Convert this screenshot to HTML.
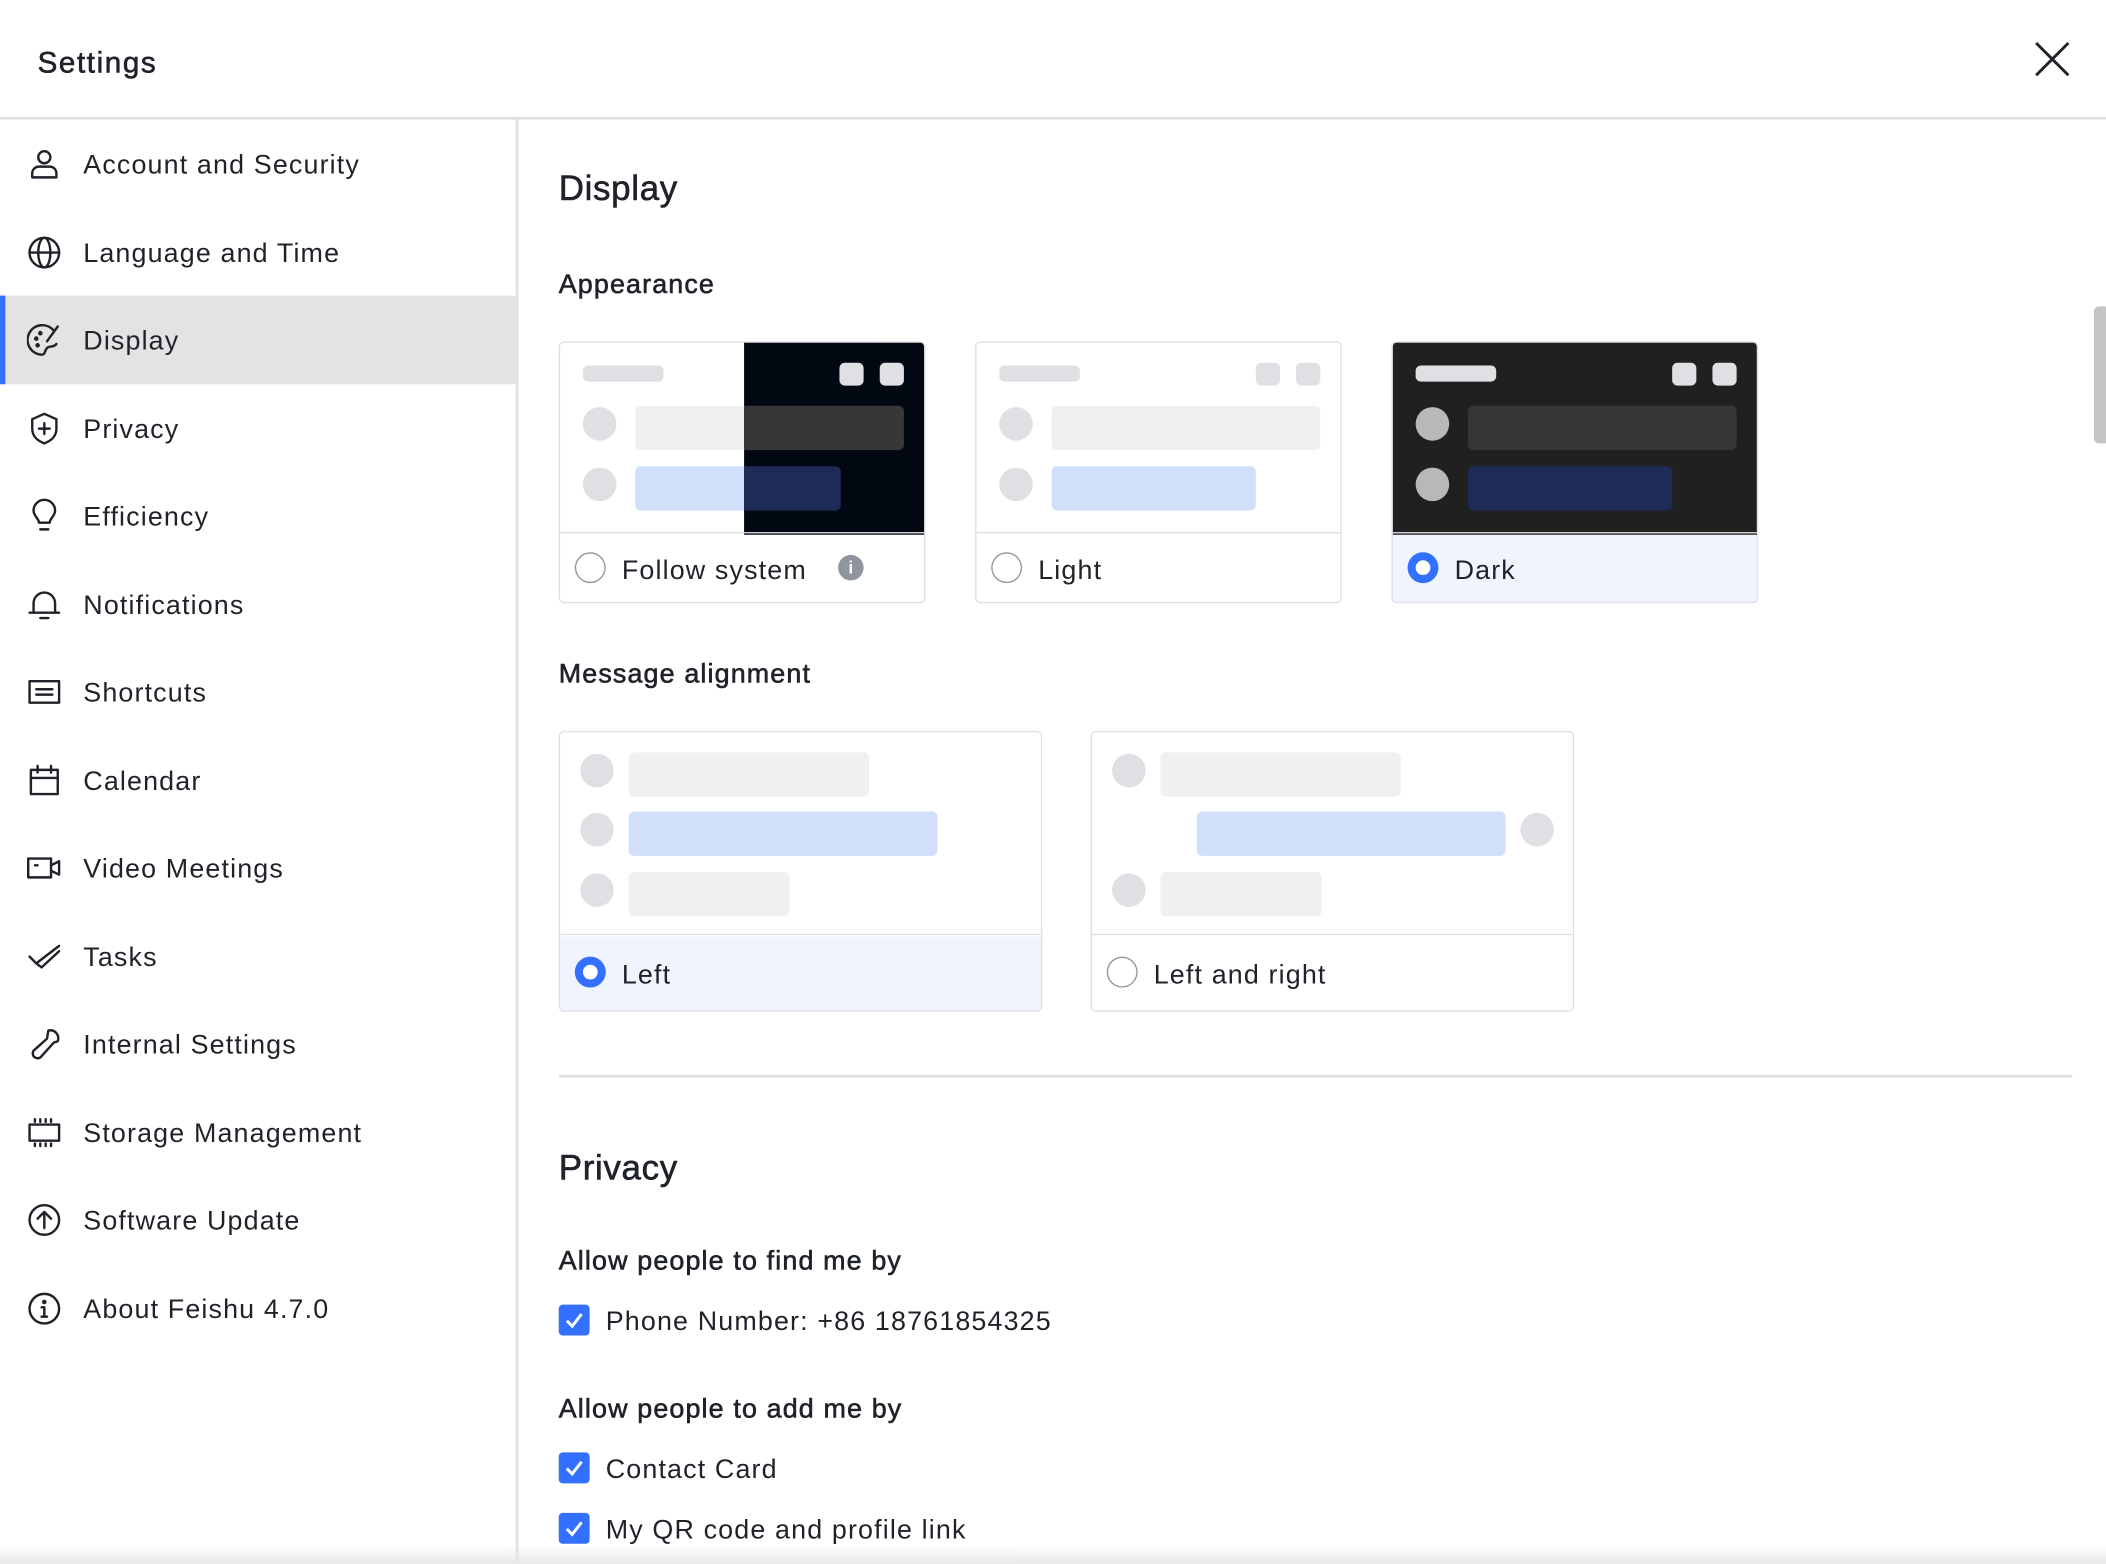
<!DOCTYPE html>
<html><head><meta charset="utf-8"><style>
*{box-sizing:border-box;margin:0;padding:0}
html,body{width:2106px;height:1564px;overflow:hidden;background:#fff}
#w{position:absolute;left:0;top:0;width:1568px;height:1164px;transform:scale(1.3431,1.3436);transform-origin:0 0;font-family:"Liberation Sans",sans-serif;color:#1f2329;letter-spacing:0.85px}
.a{position:absolute}
.t{position:absolute;white-space:nowrap;line-height:1}
.m{-webkit-text-stroke:0.45px #1f2329}
.nav{position:absolute;left:0;width:385px;height:65px}
.nav svg{position:absolute;left:20px;top:20px;width:26px;height:26px;fill:none;stroke:#1f2329;stroke-width:1.8;stroke-linecap:round;stroke-linejoin:round}
.nav span{position:absolute;left:62px;top:23px;font-size:20px;white-space:nowrap}
.card{position:absolute;border:1.5px solid #dee0e3;border-radius:4px;overflow:hidden;background:#fff}
.lbl{position:absolute;left:0;right:0;bottom:0;border-top:1.5px solid #dee0e3;font-size:20px}
.lbl span{position:absolute;left:46px;top:17px}
.radio{position:absolute;left:11px;width:23px;height:23px;border-radius:50%;border:1.5px solid #8f959e;background:#fff}
.radio.on{border:6px solid #3370ff}
.r{position:absolute;border-radius:4px}
.c{position:absolute;border-radius:50%}
.cb{position:absolute;left:416px;width:23px;height:23px;background:#3370ff;border-radius:3px}
.cb svg{position:absolute;left:3px;top:3px}
</style></head><body><div id="w">
<div class="t m" style="left:28px;top:36px;font-size:22px;letter-spacing:1.2px">Settings</div>
<svg class="a" style="left:1514px;top:30px" width="28" height="28" viewBox="0 0 28 28"><path d="M2 2L26 26M26 2L2 26" stroke="#1f2329" stroke-width="2.2"/></svg>
<div class="a" style="left:0;top:87px;width:1568px;height:2px;background:#dee0e3"></div>
<div class="a" style="left:384px;top:89px;width:2px;height:1075px;background:#dee0e3"></div>

<div class="nav" style="top:89px"><svg viewBox="0 0 26 26"><circle cx="13" cy="8" r="4.5"/><path d="M4 23v-3a5 5 0 0 1 5-5h8a5 5 0 0 1 5 5v3z"/></svg><span>Account and Security</span></div>
<div class="nav" style="top:155px"><svg viewBox="0 0 26 26"><circle cx="13" cy="13" r="11"/><ellipse cx="13" cy="13" rx="4.5" ry="11"/><path d="M2 13h22"/></svg><span>Language and Time</span></div>
<div class="a" style="left:0;top:220px;width:384px;height:66px;background:#e3e3e4"></div>
<div class="a" style="left:0;top:220px;width:4px;height:66px;background:#3370ff"></div>
<div class="nav" style="top:220px"><svg viewBox="0 0 26 26"><path d="M20 6A11 11 0 1 0 11 24c3 0 2-3 4-5s5 0 7-3"/><path d="M23 3l-8 11"/><circle cx="7" cy="12" r=".8"/><circle cx="10" cy="8" r=".8"/><circle cx="8" cy="17" r=".8"/></svg><span>Display</span></div>
<div class="nav" style="top:286px"><svg viewBox="0 0 26 26"><path d="M13 2l9 4v7c0 6-4 9-9 11-5-2-9-5-9-11V6z"/><path d="M13 9v8M9 13h8"/></svg><span>Privacy</span></div>
<div class="nav" style="top:351px"><svg viewBox="0 0 26 26"><path d="M9 18c0-3-4-5-4-9a8 8 0 0 1 16 0c0 4-4 6-4 9z"/><path d="M10 23h6"/></svg><span>Efficiency</span></div>
<div class="nav" style="top:417px"><svg viewBox="0 0 26 26"><path d="M5 19v-7a8 8 0 0 1 16 0v7M2 19h22M10 23h6"/></svg><span>Notifications</span></div>
<div class="nav" style="top:482px"><svg viewBox="0 0 26 26"><rect x="2" y="5" width="22" height="16"/><path d="M7 11h12M7 15h12"/></svg><span>Shortcuts</span></div>
<div class="nav" style="top:548px"><svg viewBox="0 0 26 26"><rect x="3" y="5" width="20" height="18"/><path d="M3 11h20M8 2v5M18 2v5"/></svg><span>Calendar</span></div>
<div class="nav" style="top:613px"><svg viewBox="0 0 26 26"><rect x="1" y="6" width="17" height="14"/><path d="M18 11l6-3v10l-6-3M6 11h2"/></svg><span>Video Meetings</span></div>
<div class="nav" style="top:679px"><svg viewBox="0 0 26 26"><path d="M2 13l5 5L24 5M7 18l4 3 13-12"/></svg><span>Tasks</span></div>
<div class="nav" style="top:744px"><svg viewBox="0 0 26 26"><path d="M16 3a6 6 0 0 1 7 8l-3 1-9 10a3 3 0 0 1-6-4l10-9z"/></svg><span>Internal Settings</span></div>
<div class="nav" style="top:810px"><svg viewBox="0 0 26 26"><rect x="2" y="7" width="22" height="12"/><path d="M6 3v2M10 3v2M14 3v2M18 3v2M6 21v2M10 21v2M14 21v2M18 21v2"/></svg><span>Storage Management</span></div>
<div class="nav" style="top:875px"><svg viewBox="0 0 26 26"><circle cx="13" cy="13" r="11"/><path d="M13 19V7M8 12l5-5 5 5"/></svg><span>Software Update</span></div>
<div class="nav" style="top:941px"><svg viewBox="0 0 26 26"><circle cx="13" cy="13" r="11"/><path d="M13 12v7M11 19h4M11 12h2"/><circle cx="13" cy="8" r=".8"/></svg><span>About Feishu 4.7.0</span></div>

<div class="t m" style="left:416px;top:127px;font-size:26px;letter-spacing:0.5px">Display</div>
<div class="t m" style="left:416px;top:202px;font-size:20px">Appearance</div>

<div class="card" style="left:416px;top:254px;width:273px;height:195px">
 <div class="a" style="left:137px;top:0;width:136px;height:143px;background:#020812"></div>
 <div class="r" style="left:17px;top:17px;width:60px;height:12px;background:#dee0e3"></div>
 <div class="r" style="left:208px;top:15px;width:18px;height:17px;background:#dee0e3"></div>
 <div class="r" style="left:238px;top:15px;width:18px;height:17px;background:#dee0e3"></div>
 <div class="c" style="left:17px;top:48px;width:25px;height:25px;background:#dee0e3"></div>
 <div class="c" style="left:17px;top:93px;width:25px;height:25px;background:#dee0e3"></div>
 <div class="r" style="left:56px;top:47px;width:81px;height:33px;background:#eff0f1;border-radius:4px 0 0 4px"></div>
 <div class="r" style="left:137px;top:47px;width:119px;height:33px;background:#373737;border-radius:0 4px 4px 0"></div>
 <div class="r" style="left:56px;top:92px;width:81px;height:33px;background:#d1dffa;border-radius:4px 0 0 4px"></div>
 <div class="r" style="left:137px;top:92px;width:72px;height:33px;background:#1e2b57;border-radius:0 4px 4px 0"></div>
 <div class="lbl" style="height:52px"><div class="radio" style="top:14px"></div><span>Follow system</span><div class="c" style="left:207px;top:16px;width:19px;height:19px;background:#8f959e;color:#fff;font-size:13px;font-weight:bold;text-align:center;line-height:19px;letter-spacing:0">i</div></div>
</div>

<div class="card" style="left:726px;top:254px;width:273px;height:195px">
 <div class="r" style="left:17px;top:17px;width:60px;height:12px;background:#dee0e3"></div>
 <div class="r" style="left:208px;top:15px;width:18px;height:17px;background:#dee0e3"></div>
 <div class="r" style="left:238px;top:15px;width:18px;height:17px;background:#dee0e3"></div>
 <div class="c" style="left:17px;top:48px;width:25px;height:25px;background:#dee0e3"></div>
 <div class="c" style="left:17px;top:93px;width:25px;height:25px;background:#dee0e3"></div>
 <div class="r" style="left:56px;top:47px;width:200px;height:33px;background:#eff0f1"></div>
 <div class="r" style="left:56px;top:92px;width:152px;height:33px;background:#d1dffa"></div>
 <div class="lbl" style="height:52px"><div class="radio" style="top:14px"></div><span>Light</span></div>
</div>

<div class="card" style="left:1036px;top:254px;width:273px;height:195px;background:#f0f4ff">
 <div class="a" style="left:0;top:0;width:273px;height:143px;background:#202020"></div>
 <div class="r" style="left:17px;top:17px;width:60px;height:12px;background:#dee0e3"></div>
 <div class="r" style="left:208px;top:15px;width:18px;height:17px;background:#dee0e3"></div>
 <div class="r" style="left:238px;top:15px;width:18px;height:17px;background:#dee0e3"></div>
 <div class="c" style="left:17px;top:48px;width:25px;height:25px;background:#b8b8b8"></div>
 <div class="c" style="left:17px;top:93px;width:25px;height:25px;background:#b8b8b8"></div>
 <div class="r" style="left:56px;top:47px;width:200px;height:33px;background:#373737"></div>
 <div class="r" style="left:56px;top:92px;width:152px;height:33px;background:#1e2b57"></div>
 <div class="lbl" style="height:52px"><div class="radio on" style="top:14px"></div><span>Dark</span></div>
</div>

<div class="t m" style="left:416px;top:492px;font-size:20px">Message alignment</div>

<div class="card" style="left:416px;top:544px;width:360px;height:209px;background:#f0f4ff">
 <div class="a" style="left:0;top:0;width:360px;height:152px;background:#fff"></div>
 <div class="c" style="left:15px;top:16px;width:25px;height:25px;background:#dee0e3"></div>
 <div class="c" style="left:15px;top:60px;width:25px;height:25px;background:#dee0e3"></div>
 <div class="c" style="left:15px;top:105px;width:25px;height:25px;background:#dee0e3"></div>
 <div class="r" style="left:51px;top:15px;width:179px;height:33px;background:#eff0f1"></div>
 <div class="r" style="left:51px;top:59px;width:230px;height:33px;background:#d1dffa"></div>
 <div class="r" style="left:51px;top:104px;width:120px;height:33px;background:#eff0f1"></div>
 <div class="lbl" style="height:57px"><div class="radio on" style="top:16px"></div><span style="top:19px">Left</span></div>
</div>

<div class="card" style="left:812px;top:544px;width:360px;height:209px">
 <div class="c" style="left:15px;top:16px;width:25px;height:25px;background:#dee0e3"></div>
 <div class="c" style="left:319px;top:60px;width:25px;height:25px;background:#dee0e3"></div>
 <div class="c" style="left:15px;top:105px;width:25px;height:25px;background:#dee0e3"></div>
 <div class="r" style="left:51px;top:15px;width:179px;height:33px;background:#eff0f1"></div>
 <div class="r" style="left:78px;top:59px;width:230px;height:33px;background:#d1dffa"></div>
 <div class="r" style="left:51px;top:104px;width:120px;height:33px;background:#eff0f1"></div>
 <div class="lbl" style="height:57px"><div class="radio" style="top:16px"></div><span style="top:19px">Left and right</span></div>
</div>

<div class="a" style="left:416px;top:800px;width:1127px;height:1.5px;background:#dee0e3"></div>
<div class="t m" style="left:416px;top:856px;font-size:26px;letter-spacing:0.5px">Privacy</div>
<div class="t m" style="left:416px;top:929px;font-size:20px">Allow people to find me by</div>
<div class="cb" style="top:971px"><svg width="17" height="17" viewBox="0 0 17 17"><path d="M3 9l4 4 7-9" stroke="#fff" stroke-width="2.2" fill="none"/></svg></div>
<div class="t" style="left:451px;top:974px;font-size:20px">Phone Number: +86 18761854325</div>
<div class="t m" style="left:416px;top:1039px;font-size:20px">Allow people to add me by</div>
<div class="cb" style="top:1081px"><svg width="17" height="17" viewBox="0 0 17 17"><path d="M3 9l4 4 7-9" stroke="#fff" stroke-width="2.2" fill="none"/></svg></div>
<div class="t" style="left:451px;top:1084px;font-size:20px">Contact Card</div>
<div class="cb" style="top:1126px"><svg width="17" height="17" viewBox="0 0 17 17"><path d="M3 9l4 4 7-9" stroke="#fff" stroke-width="2.2" fill="none"/></svg></div>
<div class="t" style="left:451px;top:1129px;font-size:20px">My QR code and profile link</div>

<div class="a" style="left:1559px;top:228px;width:9px;height:102px;background:#c4c4c4;border-radius:4px 0 0 4px"></div>
<div class="a" style="left:0;top:1150px;width:1568px;height:14px;background:linear-gradient(rgba(240,240,240,0),#e8e8e8)"></div>
</div></body></html>
